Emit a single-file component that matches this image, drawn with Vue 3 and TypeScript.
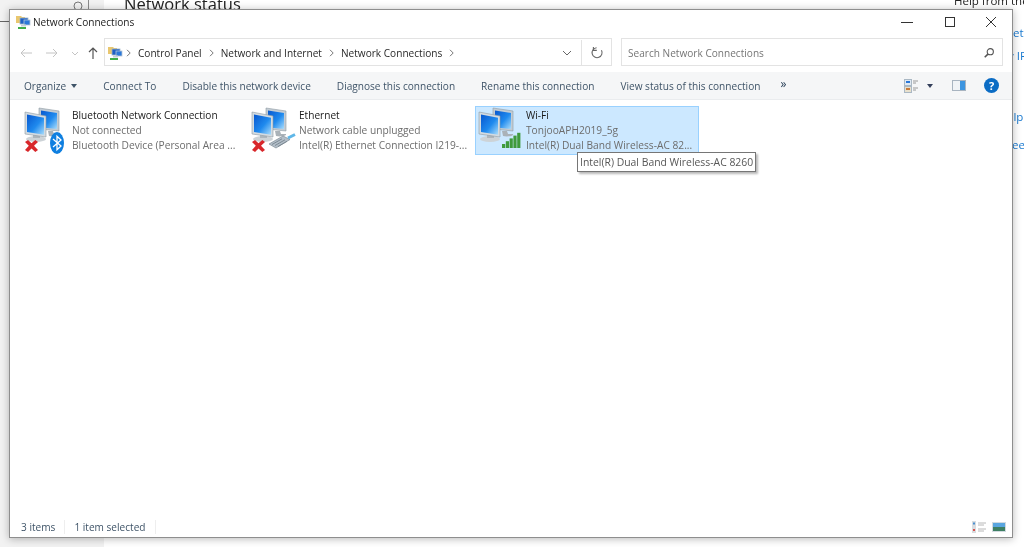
<script setup lang="ts">
interface Connection {
  name: string
  status: string
  device: string
  badge: 'bluetooth' | 'ethernet' | 'wifi'
  selected?: boolean
}

const connections: Connection[] = [
  { name: 'Bluetooth Network Connection', status: 'Not connected', device: 'Bluetooth Device (Personal Area ...', badge: 'bluetooth' },
  { name: 'Ethernet', status: 'Network cable unplugged', device: 'Intel(R) Ethernet Connection I219-...', badge: 'ethernet' },
  { name: 'Wi-Fi', status: 'TonjooAPH2019_5g', device: 'Intel(R) Dual Band Wireless-AC 82...', badge: 'wifi', selected: true },
]

const commands = ['Connect To', 'Disable this network device', 'Diagnose this connection', 'Rename this connection', 'View status of this connection']
const crumbs = ['Control Panel', 'Network and Internet', 'Network Connections']
const wifiBars = [0, 1, 2, 3, 4]
</script>

<template>
  <div class="desktop">
    <div class="backdrop">
      <aside class="side">
        <span class="side-rule"></span>
        <svg class="side-search" width="12" height="12" viewBox="0 0 12 12"><circle cx="6" cy="5" r="4" fill="none" stroke="#777" stroke-width="1" /></svg>
      </aside>
      <main class="back-main">
        <h1 class="back-title">Network status</h1>
      </main>
      <span class="back-help">Help from the web</span>
      <a class="back-link l1">net</a>
      <a class="back-link l2">y IP</a>
      <a class="back-link l3">elp</a>
      <a class="back-link l4">Fee</a>
    </div>

    <section class="window">
      <header class="titlebar">
        <svg class="app-icon" width="16" height="16" viewBox="0 0 16 16">
          <path d="M1 2h5l1 1h3v6H1z" fill="#e9c76f" />
          <rect x="5" y="4" width="8" height="6" fill="#1d5fc4" stroke="#9db4c8" stroke-width=".8" />
          <rect x="9" y="6" width="6" height="5" fill="#2b78d8" stroke="#b6c6d6" stroke-width=".8" />
          <path d="M3 13h8v2H3z" fill="#3fae4a" />
          <path d="M6 10.5h5v2H6z" fill="#c5ced6" />
        </svg>
        <span class="title-text">Network Connections</span>
        <div class="win-controls">
          <svg class="min-ic" width="14" height="14" viewBox="0 0 14 14"><path d="M1 7.500h12" stroke="#333" stroke-width="1" /></svg>
          <svg width="14" height="14" viewBox="0 0 14 14"><rect x="2.500" y="2.500" width="9" height="9" fill="none" stroke="#333" stroke-width="1" /></svg>
          <svg width="14" height="14" viewBox="0 0 14 14"><path d="M2 2l10 10M12 2L2 12" stroke="#333" stroke-width="1" /></svg>
        </div>
      </header>

      <div class="navbar">
        <div class="nav-buttons">
          <svg width="14" height="12" viewBox="0 0 14 12"><path d="M13 6H2M6 2L2 6l4 4" fill="none" stroke="#c4c4c4" stroke-width="1" /></svg>
          <svg width="14" height="12" viewBox="0 0 14 12"><path d="M1 6h11M8 2l4 4-4 4" fill="none" stroke="#c4c4c4" stroke-width="1" /></svg>
          <svg width="8" height="12" viewBox="0 0 8 12"><path d="M1 5l3 3 3-3" fill="none" stroke="#c4c4c4" stroke-width="1" /></svg>
          <svg class="up-ic" width="12" height="14" viewBox="0 0 12 14"><path d="M6 13V2M2 6l4-4 4 4" fill="none" stroke="#555" stroke-width="1.200" /></svg>
        </div>
        <div class="address">
          <svg class="addr-icon" width="16" height="16" viewBox="0 0 16 16">
            <path d="M1 2h5l1 1h3v6H1z" fill="#e9c76f" />
            <rect x="5" y="4" width="8" height="6" fill="#1d5fc4" stroke="#9db4c8" stroke-width=".8" />
            <rect x="9" y="6" width="6" height="5" fill="#2b78d8" stroke="#b6c6d6" stroke-width=".8" />
            <path d="M3 13h8v2H3z" fill="#3fae4a" />
            <path d="M6 10.5h5v2H6z" fill="#c5ced6" />
          </svg>
          <svg class="crumb-sep" width="5" height="8" viewBox="0 0 5 8"><path d="M1 .8L4.200 4 1 7.200" fill="none" stroke="#777" stroke-width="1" /></svg>
          <template v-for="c in crumbs" :key="c">
            <span class="crumb">{{ c }}</span>
            <svg class="crumb-sep" width="5" height="8" viewBox="0 0 5 8"><path d="M1 .8L4.200 4 1 7.200" fill="none" stroke="#777" stroke-width="1" /></svg>
          </template>
          <svg class="addr-drop" width="10" height="8" viewBox="0 0 10 8"><path d="M1 2l4 4 4-4" fill="none" stroke="#666" stroke-width="1" /></svg>
          <span class="addr-refresh">
            <svg width="14" height="14" viewBox="0 0 14 14"><path d="M4 2.600A5 5 0 1 0 9.500 2.400" fill="none" stroke="#666" stroke-width="1.100" transform="rotate(30 7 7)" /><path d="M3.400 1v3.400h3.400" fill="none" stroke="#666" stroke-width="1.100" /></svg>
          </span>
        </div>
        <div class="search">
          <span>Search Network Connections</span>
          <svg width="12" height="12" viewBox="0 0 14 14"><circle cx="8.500" cy="5.500" r="3.600" fill="none" stroke="#555" stroke-width="1.300" /><path d="M6 8l-4 4" stroke="#555" stroke-width="1.800" /></svg>
        </div>
      </div>

      <div class="toolbar">
        <span class="cmd org">Organize<i class="caret"></i></span>
        <span v-for="c in commands" :key="c" class="cmd">{{ c }}</span>
        <span class="more">»</span>
        <div class="tool-icons">
          <svg class="view-ic" width="15" height="14" viewBox="0 0 15 14">
            <rect x="0.500" y="0.500" width="7" height="6" fill="#dfe9f3" stroke="#aab8c4" />
            <rect x="0.500" y="7.500" width="7" height="6" fill="#e8e0cc" stroke="#aab8c4" />
            <path d="M2 3h4" stroke="#2b78d8" stroke-width="2" />
            <path d="M2 10h4" stroke="#c87a3a" stroke-width="2" />
            <path d="M9 2h5M9 4h3M9 9h5M9 11h3" stroke="#9a9a9a" stroke-width="1" />
          </svg>
          <i class="caret dark"></i>
          <svg class="pane-ic" width="14" height="11" viewBox="0 0 14 11">
            <rect x="0.500" y="0.500" width="13" height="10" fill="#f0f3f6" stroke="#a8b4c0" />
            <rect x="8" y="1" width="5" height="9" fill="#3d95e0" />
          </svg>
          <span class="help-ic">?</span>
        </div>
      </div>

      <div class="content">
        <article v-for="(conn, i) in connections" :key="conn.name" class="item" :class="{ selected: conn.selected }">
          <svg class="conn-icon" width="50" height="47" viewBox="0 0 50 47">
            <defs>
              <linearGradient :id="`scr${i}`" x1="0" y1="0" x2="1" y2="1">
                <stop offset="0" stop-color="#0757cf" />
                <stop offset=".55" stop-color="#1f8aee" />
                <stop offset="1" stop-color="#a9dcfb" />
              </linearGradient>
            </defs>
            <g transform="translate(1 0)">
              <path d="M17 1l20 3v20l-20-2z" fill="#c3ccd4" stroke="#8f9aa3" stroke-width=".6" />
              <path d="M19 3.500l16 2.400v16l-16-1.500z" :fill="`url(#scr${i})`" />
              <path d="M26 24h5l1 3h5c1 2-6 3-10 2z" fill="#aab2b8" />
              <ellipse cx="14" cy="32" rx="10" ry="3" fill="#cdd3d7" />
              <path d="M11 27h7v4h-7z" fill="#aeb6bc" />
              <path d="M3 5l21 4v21l-21-3z" fill="#d3dbe1" stroke="#8f9aa3" stroke-width=".6" />
              <path d="M5 7.500l17 3.200v17l-17-2.600z" :fill="`url(#scr${i})`" />
            </g>

            <g v-if="conn.badge !== 'wifi'">
              <path d="M4 35l3-2 3.500 3.200 3.800-3.200 2.700 2-4 3.800 4 4.200-2.700 2-3.800-3.600-3.500 3.600-3-2 3.800-4.200z" fill="#d8272b" />
            </g>
            <g v-if="conn.badge === 'bluetooth'">
              <ellipse cx="36" cy="36" rx="7" ry="11" fill="#0f7fe0" />
              <path d="M32 32l8 7-4 3.800V29.200l4 3.800-8 7" fill="none" stroke="#fff" stroke-width="1.300" />
            </g>
            <g v-if="conn.badge === 'ethernet'">
              <path d="M21 37l14-8 7 3.500-14 8.500z" fill="#b3bec8" stroke="#7f8c96" stroke-width=".7" />
              <path d="M24 37.500l10-5.700M27 38.500l10-5.700M30 39.500l9-5.200" stroke="#76838d" stroke-width=".9" />
              <path d="M40 31l7-3.500" stroke="#5fb7e8" stroke-width="3" />
            </g>
            <g v-if="conn.badge === 'wifi'">
              <rect v-for="b in wifiBars" :key="b" :x="27 + b * 3.800" :y="37 - b * 2.800" width="3.200" :height="4 + b * 2.800" fill="#3f9a3c" />
            </g>
          </svg>
          <div class="item-text">
            <span class="item-name">{{ conn.name }}</span>
            <span class="item-sub">{{ conn.status }}</span>
            <span class="item-sub">{{ conn.device }}</span>
          </div>
        </article>
        <div class="tooltip">Intel(R) Dual Band Wireless-AC 8260</div>
      </div>

      <footer class="statusbar">
        <span>3 items</span>
        <i class="stat-sep"></i>
        <span>1 item selected</span>
        <i class="stat-sep"></i>
        <div class="stat-icons">
          <svg width="14" height="12" viewBox="0 0 14 12">
            <rect x="0" y="0" width="4" height="12" fill="#d9dde0" />
            <rect x="1" y="1.500" width="2" height="2" fill="#4a8fd0" />
            <rect x="1" y="8" width="2" height="2" fill="#d9534f" />
            <path d="M6 2h8M6 4h6M6 8h8M6 10h6" stroke="#b8b8b8" stroke-width="1" />
          </svg>
          <svg width="14" height="10" viewBox="0 0 14 10">
            <rect x="0" y="0" width="14" height="10" fill="#d2dae0" />
            <rect x="1" y="1" width="12" height="4" fill="#5aa6e0" />
            <rect x="1" y="5" width="12" height="4" fill="#3e7f63" />
          </svg>
        </div>
      </footer>
    </section>
  </div>
</template>

<style>
html, body { margin: 0; background: #fff; }
</style>

<style scoped>
.desktop {
  position: relative;
  width: 1024px;
  height: 547px;
  overflow: hidden;
  font-family: "Open Sans", "Noto Sans", sans-serif;
  font-size: 10.1px;
  color: #1a1a1a;
  background: #fff;
  filter: blur(.3px);
}
.backdrop { display: flex; height: 100%; }
.side {
  position: relative;
  width: 104px;
  background: #f2f2f2;
  box-sizing: border-box;
  flex: none;
}
.side-rule { position: absolute; left: 0; top: 21px; width: 12px; height: 1px; background: #666; }
.side-search { position: absolute; left: 72px; top: 1px; }
.side::after { content: ""; position: absolute; left: 88px; top: 0; width: 1px; height: 12px; background: #8a8a8a; }
.back-main { flex: 1; }
.back-title {
  margin: -8px 0 0 20px;
  font-size: 16.5px;
  font-weight: 400;
  line-height: 24px;
  color: #222;
}
.back-help { position: absolute; left: 954px; top: -7px; font-size: 11.5px; color: #222; line-height: 16px; white-space: nowrap; }
.back-link { position: absolute; color: #1a7ad0; font-size: 11.5px; white-space: nowrap; line-height: 16px; }
.l1 { top: 25px; left: 1006px; }
.l2 { top: 48px; left: 1008px; }
.l3 { top: 109px; left: 1007px; }
.l4 { top: 137px; left: 1006px; }

.window {
  position: absolute;
  left: 9px;
  top: 9px;
  width: 1004px;
  height: 529px;
  box-sizing: border-box;
  display: flex;
  flex-direction: column;
  background: #fff;
  border: 1px solid #8e8e8e;
  box-shadow: 0 1px 8px rgba(0, 0, 0, .28);
}
.titlebar {
  display: flex;
  align-items: center;
  height: 24px;
  flex: none;
  padding-left: 5px;
}
.app-icon { margin-right: 2px; flex: none; }
.title-text { color: #222; }
.win-controls { display: flex; margin-left: auto; gap: 27px; margin-right: 14px; margin-top: -1px; }
.min-ic { margin-right: 2px; margin-left: 1px; }

.navbar {
  display: flex;
  align-items: stretch;
  height: 28px;
  margin-top: 4px;
  flex: none;
  padding-right: 9px;
}
.nav-buttons {
  width: 94px;
  flex: none;
  display: flex;
  align-items: center;
  padding: 2px 0 0 9px;
  box-sizing: border-box;
  gap: 12px;
}
.up-ic { margin-left: -4px; }
.address {
  flex: none;
  width: 508px;
  box-sizing: border-box;
  border: 1px solid #e3e3e3;
  display: flex;
  align-items: center;
  padding: 1px 0 0 2px;
  gap: 7px;
  color: #2a2a2a;
}
.addr-icon { flex: none; margin-right: -4px; }
.crumb-sep { flex: none; }
.addr-drop { margin-left: auto; margin-right: 2px; }
.addr-refresh {
  width: 29px;
  align-self: stretch;
  border-left: 1px solid #e3e3e3;
  display: flex;
  align-items: center;
  justify-content: center;
}
.search {
  margin-left: 9px;
  flex: 1;
  border: 1px solid #e3e3e3;
  box-sizing: border-box;
  display: flex;
  align-items: center;
  justify-content: space-between;
  padding: 1px 7px 0 6px;
  color: #767676;
}

.toolbar {
  margin-top: 6px;
  height: 28px;
  flex: none;
  display: flex;
  align-items: center;
  background: #f5f6f7;
  border-bottom: 1px solid #eaecee;
  padding-left: 14px;
  box-sizing: border-box;
  gap: 26px;
  color: #3f5468;
}
.cmd { white-space: nowrap; }
.org { display: inline-flex; align-items: center; }
.caret {
  display: inline-block;
  margin-left: 5px;
  border: 3px solid transparent;
  border-top: 4px solid #3f5468;
  border-bottom: 0;
}
.caret.dark { margin: 0 0 0 8px; border-top-color: #333f5a; }
.more { margin-left: -6px; color: #2a4058; font-size: 12px; line-height: 1; margin-top: -3px; }
.tool-icons { margin-left: auto; display: flex; align-items: center; margin-right: 13px; }
.pane-ic { margin-left: 19px; }
.help-ic {
  margin-left: 18px;
  width: 15px;
  height: 15px;
  border-radius: 50%;
  background: #0b6cc4;
  color: #fff;
  font-weight: 700;
  font-size: 11px;
  line-height: 15px;
  text-align: center;
}

.content {
  position: relative;
  flex: 1;
  display: grid;
  grid-template-columns: repeat(3, 224px);
  grid-auto-rows: 49px;
  align-content: start;
  gap: 3px;
  padding: 6px 0 0 11px;
}
.item {
  display: flex;
  box-sizing: border-box;
  border: 1px solid transparent;
}
.item.selected { background: #cce8ff; border-color: #99d1ff; }
.conn-icon { flex: none; margin: 0 0 0 -1px; }
.item-text {
  display: flex;
  flex-direction: column;
  padding-top: 1px;
  margin-left: 1px;
  min-width: 0;
}
.item-name { line-height: 15px; color: #1a1a1a; white-space: nowrap; }
.item-sub { line-height: 15px; font-size: 10.2px; color: #6d6d6d; white-space: nowrap; }
.tooltip {
  position: absolute;
  left: 567px;
  top: 52px;
  box-sizing: border-box;
  height: 20px;
  padding: 0 2px;
  line-height: 18px;
  font-size: 10.4px;
  background: #fff;
  border: 1px solid #767676;
  color: #575757;
  white-space: nowrap;
  box-shadow: 2px 2px 2px rgba(0, 0, 0, .28);
}

.statusbar {
  height: 20px;
  flex: none;
  display: flex;
  align-items: center;
  padding-left: 11px;
  box-sizing: border-box;
  color: #3f5468;
  gap: 9px;
}
.stat-sep { width: 1px; height: 14px; background: #eee; }
.stat-icons { margin-left: auto; margin-right: 6px; display: flex; align-items: center; gap: 6px; }
</style>
